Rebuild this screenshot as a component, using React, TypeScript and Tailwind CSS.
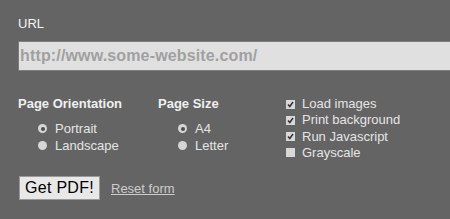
import React from 'react';

const font = { fontFamily: '"Liberation Sans", Arial, sans-serif' };

function Radio({ label, checked }: { label: string; checked?: boolean }) {
  return (
    <div className="flex items-center h-[17px] pl-[20px]">
      <span className="w-[9px] h-[9px] rounded-full bg-[#d6d6d6] flex items-center justify-center">
        {checked && <span className="w-[4px] h-[4px] rounded-full bg-[#4e4e4e]" />}
      </span>
      <span className="ml-[8px] text-[13px] leading-[17px] text-[#e4e4e4]">{label}</span>
    </div>
  );
}

function Check({ label, checked }: { label: string; checked?: boolean }) {
  return (
    <div className="flex items-center h-[16.33px]">
      <span className="w-[9px] h-[9px] bg-[#d8d8d8] flex items-center justify-center">
        {checked && (
          <svg width="7" height="7" viewBox="0 0 7 7">
            <path d="M1 3.5 L2.8 5.5 L6 1" fill="none" stroke="#333" strokeWidth="1.6" />
          </svg>
        )}
      </span>
      <span className="ml-[7px] text-[13px] leading-[16px] text-[#e4e4e4]">{label}</span>
    </div>
  );
}

export default function App() {
  return (
    <div className="w-[450px] h-[219px] bg-[#646464] overflow-hidden pl-[18px] pt-[16px]" style={font}>
      <div className="text-[13px] leading-[16px] text-[#f4f4f4]">URL</div>

      <div className="mt-[9px] w-[460px] h-[30px] bg-[#e0e0e0] border border-[#7c7c7c] flex items-center pl-[1px]">
        <span className="text-[16px] font-bold text-[#a0a0a0] leading-none tracking-[0.15px]">http://www.some-website.com/</span>
      </div>

      <div className="mt-[25px] h-[65px] flex">
        <div className="w-[140px]">
          <div className="text-[13px] leading-[16px] font-bold text-[#f0f0f0]">Page Orientation</div>
          <div className="mt-[8px]">
            <Radio label="Portrait" checked />
            <Radio label="Landscape" />
          </div>
        </div>
        <div className="w-[128px]">
          <div className="text-[13px] leading-[16px] font-bold text-[#f0f0f0]">Page Size</div>
          <div className="mt-[8px]">
            <Radio label="A4" checked />
            <Radio label="Letter" />
          </div>
        </div>
        <div className="flex flex-col">
          <Check label="Load images" checked />
          <Check label="Print background" checked />
          <Check label="Run Javascript" checked />
          <Check label="Grayscale" />
        </div>
      </div>

      <div className="mt-[15px] flex items-baseline">
        <button className="ml-[1px] w-[81px] h-[24px] bg-[#e8e8e8] border border-[#9a9a9a] text-[16px] text-black leading-none tracking-[0.3px]">
          Get PDF!
        </button>
        <a href="#" className="ml-[11px] text-[13px] text-[#cccccc] underline">Reset form</a>
      </div>
    </div>
  );
}
